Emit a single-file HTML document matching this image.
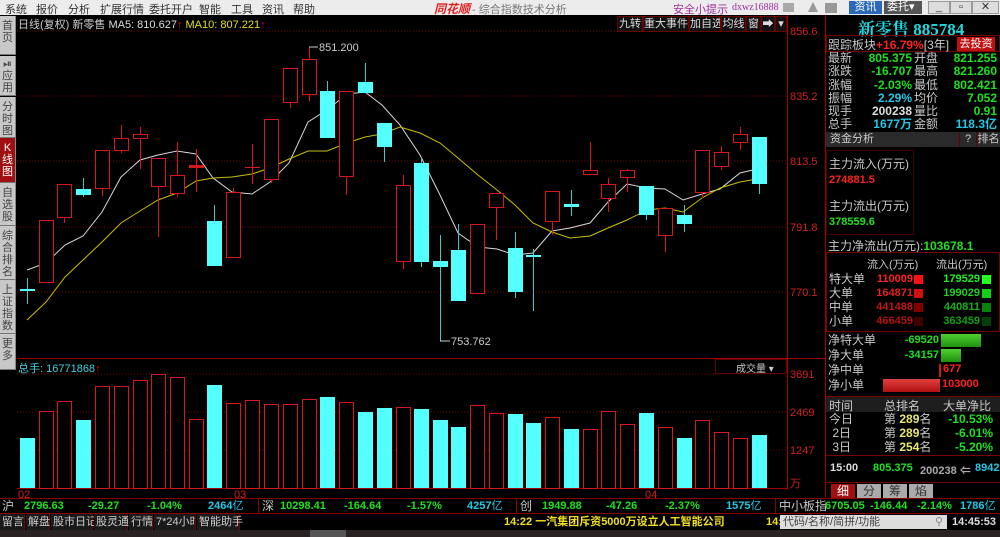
<!DOCTYPE html>
<html><head><meta charset="utf-8"><style>
*{margin:0;padding:0;box-sizing:border-box}
body{width:1000px;height:537px;background:#000;overflow:hidden;position:relative;font-family:"Liberation Sans","Noto Sans CJK SC",sans-serif;font-size:12px;color:#ccc}
.a{position:absolute;white-space:nowrap}
.menu{left:0;top:0;width:1000px;height:15px;background:#ececec;color:#333;font-size:11px}
.side{left:0;width:16px;background:#c8c8c8;color:#444;font-size:11px;line-height:12px;text-align:center;border-bottom:1px solid #777;border-right:1px solid #888;padding-top:4px}
.g{color:#1ee01e;font-weight:bold}
.r{color:#ff2020;font-weight:bold}
.c{color:#22c8e6;font-weight:bold}
.w{color:#ddd;font-weight:bold}
.y{color:#e8e870;font-weight:bold}
.lb{color:#c8c8c8;font-size:12px}
.rt{text-align:right}
.btn{border:1px solid #6a0000;background:#111;color:#ddd;font-size:11px;height:16px;line-height:14px;text-align:center;top:16px;overflow:hidden}
</style></head><body>
<div class="a menu">
<span class="a" style="left:5px;top:1px">系统</span><span class="a" style="left:36px;top:1px">报价</span><span class="a" style="left:68px;top:1px">分析</span><span class="a" style="left:100px;top:1px">扩展行情</span><span class="a" style="left:149px;top:1px">委托开户</span><span class="a" style="left:199px;top:1px">智能</span><span class="a" style="left:231px;top:1px">工具</span><span class="a" style="left:262px;top:1px">资讯</span><span class="a" style="left:293px;top:1px">帮助</span>
<span class="a" style="left:434px;top:0;color:#e02020;font-weight:bold;font-style:italic;font-size:12px">同花顺</span>
<span class="a" style="left:472px;top:1px;color:#777">- 综合指数技术分析</span>
<span class="a" style="left:673px;top:1px;color:#a030a0">安全小提示</span>
<span class="a" style="left:732px;top:2px;color:#a030a0;font-family:'Liberation Serif',serif;font-size:10px">dxwz16888</span>
<span class="a" style="left:783px;top:3px;width:11px;height:9px;background:#aaa"></span>
<span class="a" style="left:808px;top:2px;width:0;height:0;border-left:5px solid transparent;border-right:5px solid transparent;border-bottom:10px solid #999"></span>
<span class="a" style="left:825px;top:3px;width:12px;height:10px;background:#999"></span>
<span class="a" style="left:849px;top:1px;width:33px;height:13px;background:#2a6ab8;color:#fff;text-align:center;line-height:13px">资讯</span>
<span class="a" style="left:884px;top:1px;width:38px;height:13px;background:#555;color:#fff;line-height:13px;padding-left:3px">委托▾</span>
<span class="a" style="left:928px;top:1px;width:22px;height:13px;background:#ddd;border:1px solid #999;text-align:center;line-height:11px">_</span>
<span class="a" style="left:950px;top:1px;width:22px;height:13px;background:#ddd;border:1px solid #999;text-align:center;line-height:11px">▫</span>
<span class="a" style="left:972px;top:1px;width:27px;height:13px;background:#ddd;border:1px solid #999;text-align:center;line-height:11px">✕</span>
</div>
<div class="a side" style="top:16px;height:39px">首<br>页</div>
<div class="a side" style="top:56px;height:40px;padding-top:2px">⏯<br>应<br>用</div>
<div class="a side" style="top:97px;height:41px">分<br>时<br>图</div>
<div class="a side" style="top:138px;height:45px;background:#a01010;color:#fff">K<br>线<br>图</div>
<div class="a side" style="top:183px;height:43px">自<br>选<br>股</div>
<div class="a side" style="top:226px;height:54px">综<br>合<br>排<br>名</div>
<div class="a side" style="top:280px;height:54px">上<br>证<br>指<br>数</div>
<div class="a side" style="top:334px;height:36px">更<br>多</div>
<div class="a" style="left:0;top:370px;width:16px;height:127px;background:#000"></div>

<svg class="a" style="left:0;top:0" width="1000" height="537">
<g stroke="#7a0000" stroke-dasharray="1,2" stroke-width="1">
<line x1="17" y1="31" x2="786" y2="31"/><line x1="17" y1="96" x2="786" y2="96"/><line x1="17" y1="161" x2="786" y2="161"/><line x1="17" y1="227" x2="786" y2="227"/><line x1="17" y1="292" x2="786" y2="292"/>
<line x1="17" y1="374" x2="786" y2="374"/><line x1="17" y1="412" x2="786" y2="412"/><line x1="17" y1="450" x2="786" y2="450"/>
</g>
<line x1="787.5" y1="15" x2="787.5" y2="490" stroke="#a00000"/>
<line x1="17" y1="358.5" x2="826" y2="358.5" stroke="#a00000"/>
<line x1="17" y1="488.5" x2="787" y2="488.5" stroke="#a00000"/>
<line x1="825.5" y1="15" x2="825.5" y2="497" stroke="#a00000"/>
<g font-size="11" fill="#d02020" font-family="Liberation Sans">
<text x="790" y="35">856.6</text><text x="790" y="100">835.2</text><text x="790" y="165">813.5</text><text x="790" y="231">791.8</text><text x="790" y="296">770.1</text>
<text x="790" y="378">3691</text><text x="790" y="416">2469</text><text x="790" y="454">1247</text><text x="790" y="487" font-family="Noto Sans CJK SC">万</text>
<text x="18" y="498">02</text><text x="234" y="498">03</text><text x="645" y="498">04</text>
</g>
<polyline fill="none" stroke="#d8d8d8" stroke-width="1" points="27,270 46,263 65,245 83,236 102,212 121,177 140,160 158,155 177,151 196,154 213,178 232,192 252,194 270,182 289,163 308,122 327,110 347,94 365,92 382,105 400,125 420,155 440,195 458,233 478,247 497,249 515,255 533,253 552,231 570,228 590,223 608,202 627,184 647,188 665,189 683,200 702,194 720,189 740,173 757,169"/>
<polyline fill="none" stroke="#c8c000" stroke-width="1" points="27,320 46,302 65,277 83,260 102,242 121,223 140,211 158,200 177,193 196,181 213,178 232,177 252,174 270,168 289,159 308,151 327,151 347,143 365,137 382,134 400,127 420,133 440,143 458,158 478,175 497,190 515,205 533,223 552,232 570,238 590,236 608,228 627,220 647,210 665,208 683,212 702,198 720,188 740,182 757,179"/>
<g id="k"></g>
<g id="v"></g>
<g fill="#ccc" font-size="11" font-family="Liberation Sans">
<line x1="309" y1="47" x2="318" y2="47" stroke="#ccc"/><text x="319" y="51">851.200</text>
<line x1="440" y1="341" x2="450" y2="341" stroke="#ccc"/><text x="451" y="345">753.762</text>
</g>
<g stroke="#b00000" stroke-width="0.8">
<path d="M957,198 L957,162 A36,36 0 0 1 965.95,163.13 Z" fill="#ff0000"/>
<path d="M957,198 L965.95,163.13 A36,36 0 0 1 979.95,170.26 Z" fill="#e00000"/>
<path d="M957,198 L979.95,170.26 A36,36 0 0 1 991.24,209.12 Z" fill="#a00000"/>
<path d="M957,198 L991.24,209.12 A36,36 0 0 1 957,234 Z" fill="#5a0000"/>
<path d="M957,198 L957,234 A36,36 0 0 1 927.88,219.16 Z" fill="#0a4a0a"/>
<path d="M957,198 L927.88,219.16 A36,36 0 0 1 926.6,178.71 Z" fill="#1a901a"/>
<path d="M957,198 L926.6,178.71 A36,36 0 0 1 939.66,166.45 Z" fill="#20c020"/>
<path d="M957,198 L939.66,166.45 A36,36 0 0 1 957,162 Z" fill="#00f000"/>
</g>
<g fill="#fff" font-size="9" font-family="Liberation Sans">
<text x="964" y="172">7%</text><text x="975" y="190">19%</text><text x="962" y="216">20%</text><text x="936" y="218">15%</text><text x="921" y="194">19%</text><text x="931" y="175">8%</text><text x="944" y="169">8%</text>
</g>
</svg>

<div class="a" style="left:18px;top:16px;font-size:11px;color:#ccc">日线(复权) 新零售 <span style="color:#ddd">MA5: 810.627</span><span style="color:#e00">↑</span> <span style="color:#e0e020">MA10: 807.221</span><span style="color:#e00">↑</span></div>
<div class="a btn" style="left:617px;width:26px">九转</div>
<div class="a btn" style="left:643px;width:46px">重大事件</div>
<div class="a btn" style="left:689px;width:32px">加自选</div>
<div class="a btn" style="left:721px;width:25px">均线</div>
<div class="a btn" style="left:746px;width:15px">窗</div>
<div class="a btn" style="left:761px;width:14px">➡</div>
<div class="a btn" style="left:775px;width:12px">▾</div>
<div class="a" style="left:18px;top:360px;font-size:11px;color:#40d0e0">总手: 16771868<span style="color:#e00">↑</span></div>
<div class="a" style="left:715px;top:359px;width:72px;height:15px;border:1px solid #600;font-size:10px;color:#ccc;padding-left:20px">成交量 ▾</div>

<div class="a" style="left:826px;top:15px;width:174px;height:482px;background:#000"></div>
<div class="a" style="left:858px;top:15px;font-family:'Liberation Serif','Noto Serif CJK SC',serif;font-size:17px;font-weight:bold;color:#20d8e0">新零售 885784</div>
<div class="a" style="left:826px;top:35px;width:174px;height:17px;border:1px solid #700"></div>
<div class="a lb" style="left:828px;top:36px">跟踪板块<span class="r">+16.79%</span><span style="color:#ccc">[3年]</span></div>
<div class="a" style="left:957px;top:37px;width:38px;height:14px;background:#c01010;color:#fff;font-size:11px;text-align:center;line-height:14px">去投资</div>
<div class="a lb" style="left:828px;top:52px;line-height:13.3px">最新<br>涨跌<br>涨幅<br>振幅<br>现手<br>总手</div>
<div class="a lb" style="left:914px;top:52px;line-height:13.3px">开盘<br>最高<br>最低<br>均价<br>量比<br>金额</div>
<div class="a rt" style="left:850px;top:52px;width:62px;line-height:13.3px;font-weight:bold"><span class="g">805.375</span><br><span class="g">-16.707</span><br><span class="g">-2.03%</span><br><span class="c">2.29%</span><br><span class="w">200238</span><br><span class="c">1677万</span></div>
<div class="a rt" style="left:935px;top:52px;width:62px;line-height:13.3px;font-weight:bold"><span class="g">821.255</span><br><span class="g">821.260</span><br><span class="g">802.421</span><br><span class="g">7.052</span><br><span class="g">0.91</span><br><span class="c">118.3亿</span></div>
<div class="a" style="left:826px;top:132px;width:174px;height:15px;background:#2a2a2a;font-size:11px;color:#ccc;padding-left:4px;line-height:15px">资金分析<span class="a" style="left:133px;top:0;width:17px;text-align:center;border-left:1px solid #600">?</span><span class="a" style="left:150px;top:0;width:24px;text-align:center;border-left:1px solid #600">排名</span></div>
<div class="a lb" style="left:829px;top:155px;font-size:12px">主力流入(万元)</div>
<div class="a r" style="left:829px;top:174px;font-size:11px">274881.5</div>
<div class="a lb" style="left:829px;top:197px;font-size:12px">主力流出(万元)</div>
<div class="a g" style="left:829px;top:216px;font-size:11px">378559.6</div>
<div class="a" style="left:826px;top:150px;width:88px;height:85px;border:1px solid #400"></div>
<div class="a lb" style="left:828px;top:237px">主力净流出(万元):<span class="g">103678.1</span></div>
<div class="a" style="left:826px;top:252px;width:174px;height:80px;border:1px solid #700"></div>
<div class="a lb" style="left:867px;top:256px;font-size:11px">流入(万元)</div>
<div class="a lb" style="left:936px;top:256px;font-size:11px">流出(万元)</div>
<div class="a lb" style="left:829px;top:272px;line-height:14px">特大单<br>大单<br>中单<br>小单</div>
<div class="a rt" style="left:860px;top:272px;width:53px;line-height:14px;font-size:11px;font-weight:bold"><span style="color:#ff2020">110009</span><br><span style="color:#e02020">164871</span><br><span style="color:#c01818">441488</span><br><span style="color:#b01010">466459</span></div>
<div class="a rt" style="left:930px;top:272px;width:50px;line-height:14px;font-size:11px;font-weight:bold"><span style="color:#20f020">179529</span><br><span style="color:#20d020">199029</span><br><span style="color:#18b018">440811</span><br><span style="color:#10a010">363459</span></div>
<div class="a" style="left:914px;top:275px;width:9px;height:9px;background:#ff1010"></div>
<div class="a" style="left:914px;top:289px;width:9px;height:9px;background:#d01010"></div>
<div class="a" style="left:914px;top:303px;width:9px;height:9px;background:#800000"></div>
<div class="a" style="left:914px;top:317px;width:9px;height:9px;background:#400000"></div>
<div class="a" style="left:982px;top:275px;width:9px;height:9px;background:#20ff20"></div>
<div class="a" style="left:982px;top:289px;width:9px;height:9px;background:#10d010"></div>
<div class="a" style="left:982px;top:303px;width:9px;height:9px;background:#0a800a"></div>
<div class="a" style="left:982px;top:317px;width:9px;height:9px;background:#044004"></div>
<div class="a lb" style="left:828px;top:333px;line-height:15px">净特大单<br>净大单<br>净中单<br>净小单</div>
<div class="a rt" style="left:880px;top:333px;width:59px;line-height:15px;font-size:11px;font-weight:bold"><span class="g">-69520</span><br><span class="g">-34157</span></div>
<div class="a" style="left:941px;top:334px;width:40px;height:13px;background:linear-gradient(#50d030,#209010)"></div>
<div class="a" style="left:941px;top:349px;width:20px;height:13px;background:linear-gradient(#50d030,#209010)"></div>
<div class="a" style="left:939px;top:364px;width:2px;height:13px;background:#c02020"></div>
<div class="a r" style="left:943px;top:363px;font-size:11px">677</div>
<div class="a" style="left:883px;top:379px;width:57px;height:13px;background:linear-gradient(#e04040,#b01010)"></div>
<div class="a r" style="left:942px;top:378px;font-size:11px">103000</div>
<div class="a" style="left:826px;top:396px;width:174px;height:1px;background:#700"></div>
<div class="a" style="left:826px;top:397px;width:174px;height:15px;background:#1e1e1e"></div>
<div class="a lb" style="left:829px;top:397px">时间</div>
<div class="a lb" style="left:884px;top:397px">总排名</div>
<div class="a lb" style="left:943px;top:397px">大单净比</div>
<div class="a lb" style="left:829px;top:412px;line-height:14px">今日<br>&nbsp;2日<br>&nbsp;3日</div>
<div class="a lb" style="left:884px;top:412px;line-height:14px">第 <span class="y">289</span>名<br>第 <span class="y">289</span>名<br>第 <span class="y">254</span>名</div>
<div class="a rt" style="left:940px;top:412px;width:53px;line-height:14px" ><span class="g">-10.53%</span><br><span class="g">-6.01%</span><br><span class="g">-5.20%</span></div>
<div class="a" style="left:826px;top:455px;width:174px;height:1px;background:#700"></div>
<div class="a w" style="left:830px;top:462px;font-size:11px">15:00</div>
<div class="a g" style="left:873px;top:462px;font-size:11px">805.375</div>
<div class="a" style="left:920px;top:462px;font-size:11px;color:#aaa;font-weight:bold">200238 ⇐</div>
<div class="a c" style="left:975px;top:462px;font-size:11px">8942</div>
<div class="a" style="left:826px;top:482px;width:174px;height:1px;background:#700"></div>
<div class="a" style="left:831px;top:484px;width:24px;height:14px;background:#a01010;color:#fff;text-align:center;font-size:12px;line-height:14px">细</div>
<div class="a" style="left:857px;top:484px;width:24px;height:14px;background:#aaa;color:#333;text-align:center;line-height:14px">分</div>
<div class="a" style="left:883px;top:484px;width:24px;height:14px;background:#aaa;color:#333;text-align:center;line-height:14px">筹</div>
<div class="a" style="left:909px;top:484px;width:24px;height:14px;background:#aaa;color:#333;text-align:center;line-height:14px">焰</div>

<div class="a" style="left:0;top:498px;width:1000px;height:16px;border-top:1px solid #800;border-bottom:1px solid #800;background:#000;font-size:11px;line-height:14px">
<span class="a lb" style="left:2px">沪</span><span class="a g" style="left:24px">2796.63</span><span class="a g" style="left:88px">-29.27</span><span class="a g" style="left:147px">-1.04%</span><span class="a c" style="left:208px">2464<span style="font-weight:normal">亿</span></span>
<span class="a" style="left:258px;top:0;width:1px;height:14px;background:#800"></span>
<span class="a lb" style="left:262px">深</span><span class="a g" style="left:280px">10298.41</span><span class="a g" style="left:344px">-164.64</span><span class="a g" style="left:407px">-1.57%</span><span class="a c" style="left:467px">4257<span style="font-weight:normal">亿</span></span>
<span class="a" style="left:516px;top:0;width:1px;height:14px;background:#800"></span>
<span class="a lb" style="left:520px">创</span><span class="a g" style="left:542px">1949.88</span><span class="a g" style="left:606px">-47.26</span><span class="a g" style="left:665px">-2.37%</span><span class="a c" style="left:726px">1575<span style="font-weight:normal">亿</span></span>
<span class="a" style="left:775px;top:0;width:1px;height:14px;background:#800"></span>
<span class="a lb" style="left:779px">中小板指</span><span class="a g" style="left:825px">6705.05</span><span class="a g" style="left:870px">-146.44</span><span class="a g" style="left:917px">-2.14%</span><span class="a c" style="left:960px">1786<span style="font-weight:normal">亿</span></span>
</div>
<div class="a" style="left:0;top:514px;width:1000px;height:16px;background:#000;font-size:11px;line-height:16px;color:#ccc">
<span class="a" style="left:0;width:25px;height:16px;background:#1a1a1a;border-right:1px solid #700;padding-left:2px">留言</span>
<span class="a" style="left:26px;width:24px;height:16px;background:#1a1a1a;border-right:1px solid #700;padding-left:2px">解盘</span>
<span class="a" style="left:51px;width:42px;height:16px;background:#1a1a1a;border-right:1px solid #700;padding-left:2px">股市日记</span>
<span class="a" style="left:94px;width:34px;height:16px;background:#1a1a1a;border-right:1px solid #700;padding-left:2px">股灵通</span>
<span class="a" style="left:129px;width:24px;height:16px;background:#1a1a1a;border-right:1px solid #700;padding-left:2px">行情</span>
<span class="a" style="left:154px;width:42px;height:16px;background:#1a1a1a;border-right:1px solid #700;padding-left:2px;overflow:hidden">7*24小时</span>
<span class="a" style="left:197px;width:43px;height:16px;background:#1a1a1a;border-right:1px solid #700;padding-left:2px">智能助手</span>
<span class="a" style="left:504px;color:#f0e020;font-weight:bold">14:22 一汽集团斥资5000万设立人工智能公司</span>
<span class="a" style="left:766px;color:#f0e020;font-weight:bold">14:</span>
<span class="a" style="left:780px;top:1px;width:167px;height:14px;background:#ddd;color:#444;line-height:14px;padding-left:3px">代码/名称/简拼/功能<span style="float:right;padding-right:4px;color:#888">⚲</span></span>
<span class="a" style="left:952px;color:#ddd;font-weight:bold">14:45:53</span>
</div>
<div class="a" style="left:0;top:530px;width:1000px;height:7px;background:#2a2222"></div>
<div class="a" style="left:310px;top:530px;width:36px;height:7px;background:#555"></div>

<script>
var K=[[27,289,291,278,304,1],[46,220,283,220,283,0],[64,184,218,184,223,0],[83,189,195,178,197,1],[102,150,189,150,196,0],[121,138,151,125,153,0],[140,134,139,127,169,0],[158,158,187,158,237,0],[177,175,194,142,197,0],[196,165,168,149,192,0],[214,221,266,205,266,1],[233,192,258,188,258,0],[252,167,168,144,184,0],[271,119,180,119,183,0],[290,68,103,68,108,0],[309,59,95,47,101,0],[327,91,138,81,138,1],[346,91,177,91,195,0],[365,82,93,63,93,1],[384,123,147,123,162,1],[403,185,262,175,269,0],[421,163,262,158,267,1],[440,261,267,235,341,1],[458,250,301,224,301,1],[477,224,294,224,294,0],[496,193,208,193,240,0],[515,248,292,232,298,1],[533,255,257,249,311,1],[552,191,222,191,235,0],[571,204,207,190,216,1],[590,170,175,142,175,0],[608,184,199,178,212,0],[627,170,178,169,192,0],[646,186,215,186,220,1],[665,208,236,208,252,0],[684,215,224,205,232,1],[702,150,193,150,198,0],[721,152,167,146,170,0],[740,134,143,127,150,0],[759,137,184,137,194,1]];
var V=[438,411,401,420,386,386,380,374,377,419,385,403,400,404,404,399,397,402,412,408,407,409,420,427,405,413,414,423,417,429,429,411,424,413,427,438,420,432,438,435];
var s='',v='';
K.forEach(function(k,i){var x=k[0],c=k[5];var col=c?'#40c8c8':'#d81818';
s+='<line x1="'+(x+.5)+'" y1="'+k[3]+'" x2="'+(x+.5)+'" y2="'+k[4]+'" stroke="'+col+'"/>';
var h=Math.max(1,k[2]-k[1]);
if(h<=3){s+='<rect x="'+(x-7)+'" y="'+k[1]+'" width="15" height="'+h+'" fill="'+(c?'#54ffff':'#d81818')+'"/>';}
else if(c)s+='<rect x="'+(x-7)+'" y="'+k[1]+'" width="15" height="'+h+'" fill="#54ffff"/>';
else s+='<rect x="'+(x-6.5)+'" y="'+(k[1]+.5)+'" width="14" height="'+(h-1)+'" fill="#000" stroke="#d81818"/>';
var t=V[i];
if(c)v+='<rect x="'+(x-7)+'" y="'+t+'" width="15" height="'+(488-t)+'" fill="#54ffff"/>';
else v+='<rect x="'+(x-6.5)+'" y="'+(t+.5)+'" width="14" height="'+(488-t)+'" fill="#000" stroke="#d81818"/>';
});
document.getElementById('k').innerHTML=s;document.getElementById('v').innerHTML=v;
</script>
</body></html>
